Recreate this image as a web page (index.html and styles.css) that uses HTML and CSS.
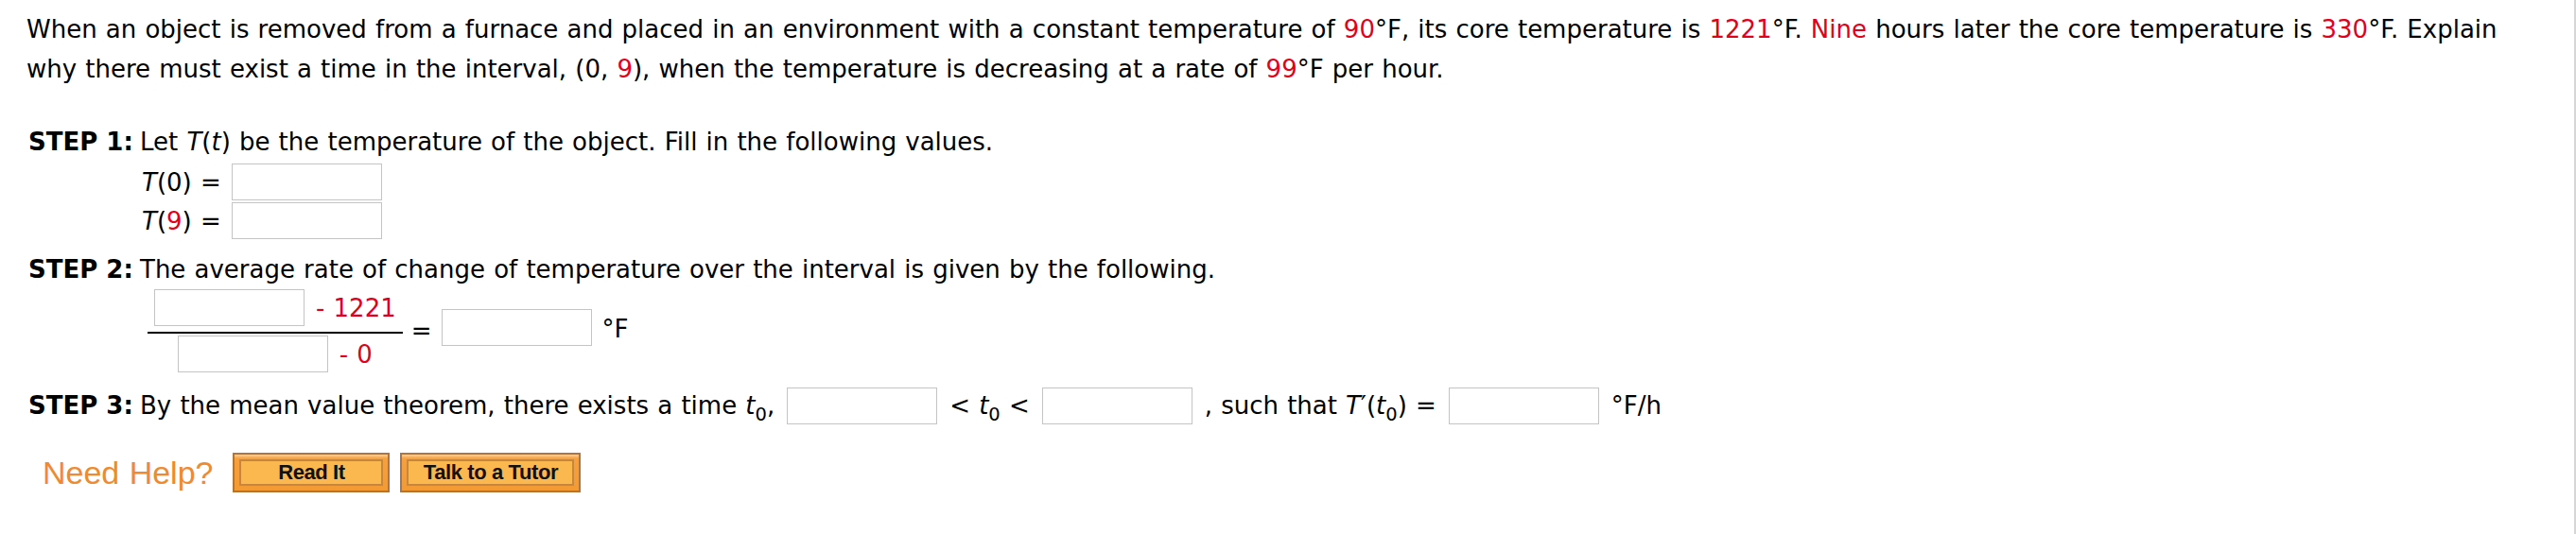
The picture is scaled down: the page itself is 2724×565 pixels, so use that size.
FILE: index.html
```html
<!DOCTYPE html>
<html lang="en">
<head>
<meta charset="utf-8">
<title>Mean value theorem</title>
<link rel="stylesheet" href="styles.css">
</head>
<body>
<div class="page">
  <p class="question">When an object is removed from a furnace and placed in an environment with a constant temperature of <span class="red">90</span>°F, its core temperature is <span class="red">1221</span>°F. <span class="red">Nine</span> hours later the core temperature is <span class="red">330</span>°F. Explain why there must exist a time in the interval, (0, <span class="red">9</span>), when the temperature is decreasing at a rate of <span class="red">99</span>°F per hour.</p>

  <div class="step step1">
    <div class="step-label">STEP 1:</div>
    <div class="step-body">
      <div class="step-text">Let <i>T</i>(<i>t</i>) be the temperature of the object. Fill in the following values.</div>
      <div class="values">
        <div class="value-row"><span class="expr"><i>T</i>(0) =</span><span class="box"></span></div>
        <div class="value-row"><span class="expr"><i>T</i>(<span class="red">9</span>) =</span><span class="box"></span></div>
      </div>
    </div>
  </div>

  <div class="step step2">
    <div class="step-label">STEP 2:</div>
    <div class="step-body">
      <div class="step-text">The average rate of change of temperature over the interval is given by the following.</div>
      <div class="equation">
        <div class="fraction">
          <div class="num"><span class="box"></span><span class="red term">- 1221</span></div>
          <div class="den"><span class="box"></span><span class="red term">- 0</span></div>
        </div>
        <span class="eq">=</span>
        <span class="box result"></span>
        <span class="unit">°F</span>
      </div>
    </div>
  </div>

  <div class="step step3">
    <div class="step-label">STEP 3:</div>
    <div class="step-body mvt">
      <span>By the mean value theorem, there exists a time <i>t</i><sub>0</sub>,</span>
      <span class="box"></span>
      <span>&lt; <i>t</i><sub>0</sub> &lt;</span>
      <span class="box"></span>
      <span>, such that <i>T</i>′(<i>t</i><sub>0</sub>) =</span>
      <span class="box"></span>
      <span>°F/h</span>
    </div>
  </div>

  <div class="help">
    <span class="need">Need Help?</span>
    <span class="btn btn-read"><span class="btn-inner">Read It</span></span>
    <span class="btn btn-tutor"><span class="btn-inner">Talk to a Tutor</span></span>
  </div>
</div>
</body>
</html>
```
FILE: styles.css
```css
html, body {
  margin: 0;
  padding: 0;
  background: #fff;
}
body {
  font-family: "DejaVu Sans", Verdana, sans-serif;
  font-size: 26px;
  word-spacing: 0.9px;
  color: #000;
}
.page {
  box-sizing: border-box;
  width: 2724px;
  height: 565px;
  border-right: 2px solid #d6d6d6;
  padding: 10px 40px 0 28px;
}
.red { color: #e3001b; }
.question {
  margin: 0;
  line-height: 42px;
}
.step {
  display: flex;
  padding-left: 2px;
}
.step-label {
  flex: none;
  width: 118px;
  font-weight: bold;
  word-spacing: 0;
  line-height: 40px;
}
.step-body { flex: 1; }
.step-text { line-height: 40px; }
.step1 { margin-top: 36px; }
.step2 { margin-top: 11px; }
.step3 { margin-top: 15px; }
.values {
  display: flex;
  flex-direction: column;
  margin-top: 2px;
}
.value-row {
  display: flex;
  align-items: center;
  height: 41px;
}
.expr { width: 95px; padding-left: 2px; }
.box {
  display: inline-block;
  box-sizing: border-box;
  width: 159px;
  height: 39px;
  border: 1px solid #c4c4c4;
  background: #fff;
  flex: none;
}
.equation {
  display: flex;
  align-items: center;
  margin-top: 1px;
  margin-left: 8px;
}
.fraction {
  display: flex;
  flex-direction: column;
  align-items: center;
}
.num, .den {
  display: flex;
  align-items: center;
  gap: 12px;
}
.num {
  padding: 0 7px 6px;
  border-bottom: 2px solid #000;
}
.den { padding-top: 2px; }
.term { line-height: 1; }
.eq { margin: 0 10px 0 9px; }
.result { margin-bottom: 7px; }
.unit { margin-left: 11px; margin-bottom: 4px; }
.mvt {
  display: flex;
  align-items: center;
  gap: 13px;
  line-height: 40px;
}
sub {
  font-size: 0.75em;
  vertical-align: -0.35em;
  line-height: 0;
}
.help {
  display: flex;
  align-items: center;
  margin-top: 30px;
  padding-left: 17px;
  height: 42px;
}
.need {
  font-family: "Liberation Sans", Arial, sans-serif;
  font-size: 34px;
  color: #ef8a2f;
  margin-right: 21px;
}
.btn {
  box-sizing: border-box;
  height: 42px;
  padding: 5px;
  border: 2px solid #b47436;
  background: linear-gradient(#fcd3a0 0, #f7a03c 4px, #f39a33 100%);
  margin-right: 11px;
}
.btn-read { width: 166px; }
.btn-tutor { width: 191px; }
.btn-inner {
  display: flex;
  align-items: center;
  justify-content: center;
  box-sizing: border-box;
  height: 100%;
  border: 2px solid #c78640;
  background: #fbb84f;
  font-family: "Liberation Sans", Arial, sans-serif;
  font-weight: bold;
  font-size: 22px;
  letter-spacing: -0.4px;
  word-spacing: 0;
  color: #111;
}
```
